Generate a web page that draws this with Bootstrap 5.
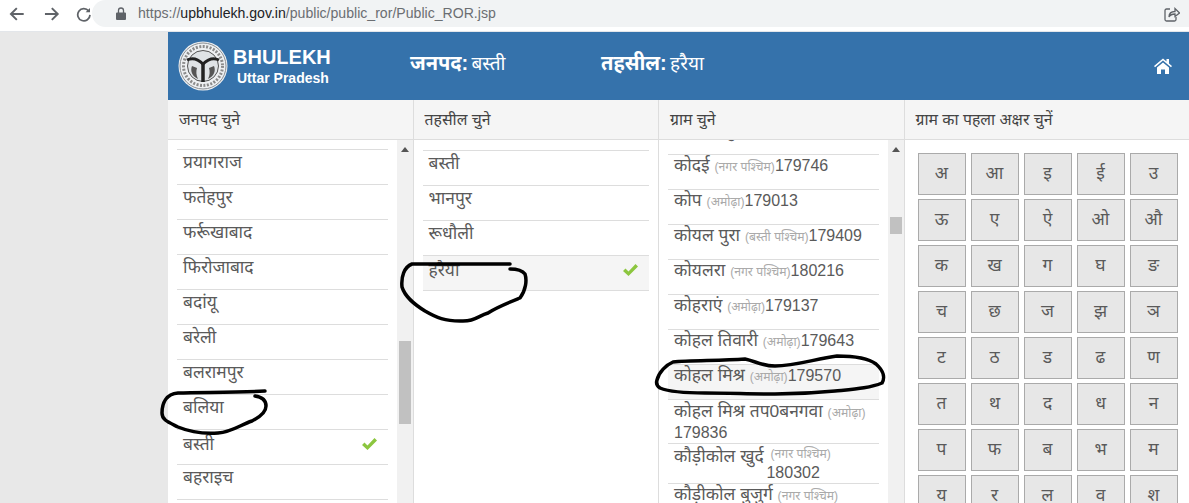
<!DOCTYPE html>
<html lang="hi">
<head>
  <meta charset="UTF-8">
  <meta name="viewport" content="width=device-width, initial-scale=1.0">
  <title>Bhulekh - Public ROR</title>
  <link href="https://cdn.jsdelivr.net/npm/bootstrap@5.3.3/dist/css/bootstrap.min.css" rel="stylesheet" />
  <style>
    html, body { height: 503px; overflow: hidden; }
    body { background-color: #e8e8e8; font-family: "Liberation Sans", "Noto Sans", "Noto Sans Devanagari", Arial, sans-serif; color: #555; position: relative; }
    .chrome-bar { height: 32px; background: #fff; border-bottom: 1px solid #e3e6ea; padding-bottom: 4px; }
    .nav-btns { width: 92px; padding-left: 7px; gap: 15px; }
    .omnibox { background: #f1f3f4; border-radius: 14px 0 0 14px; padding: 0 9px 0 24px; font-size: 14.1px; color: #6b6e72; }
    .omnibox b { font-weight: 400; color: #202124; }
    .app-wrap { margin-left: 168px; height: 471px; background: #fff; }
    .site-head { height: 68px; background: #3572ab; color: #fff; padding: 0 17px 0 10px; }
    .brand-txt { margin-left: 5px; width: 177px; }
    .brand-main { font-size: 20px; font-weight: 700; line-height: 22px; }
    .brand-sub { font-size: 14px; font-weight: 700; line-height: 16px; padding-left: 4px; margin-top: 2px; }
    .head-pick { font-size: 19px; width: 191px; padding-bottom: 5px; }
    .head-pick strong { font-size: 20px; margin-right: -2px; }
    .col-a, .col-b, .col-c { width: 245.5px; flex: none; }
    .col-d { flex: 1; }
    .pane-title { height: 40px; background: #f5f5f5; border-bottom: 1px solid #ddd; border-right: 1px solid #ddd; padding: 0 11px; font-size: 15.8px; line-height: 40px; color: #444; }
    .pane-body { height: 363px; overflow: hidden; border-right: 1px solid #ddd; }
    .pick-list { padding: 9px 9px 0; min-width: 0; }
    .pick-list.pushed { padding-top: 10px; }
    .pick-list.scrolled { margin-top: -30px; }
    .pick-list.scrolled .pick-row { line-height: 21px; }
    .pick-row { height: 35px; border-top: 1px solid #ddd; padding: 0 6px; font-size: 17.4px; line-height: 24px; color: #5a5a5a; background: transparent; }
    .pick-row.on { background: #f5f5f5; }
    .pick-row.sel-row { padding-bottom: 6px; }
    .pick-list.scrolled .pick-row.tall { height: 44px; line-height: 19px; padding-top: 2px; }
    .pick-list.scrolled .pick-row.mid { height: 40px; line-height: 20px; padding-top: 2px; }
    .pick-row small { font-size: 12.2px; color: #aaa; }
    .vill-no { font-size: 16px; }
    .stack-in { display: inline-block; vertical-align: top; line-height: 20px; margin-left: -2px; }
    .stack-in small { display: block; padding-left: 4px; line-height: 16px; }
    .tick { width: 17px; height: 14px; margin-right: 4px; }
    .track { width: 16px; background: #f1f1f1; flex: none; position: relative; }
    .track::before { content: ""; display: block; width: 0; margin: 7px auto 0; border: 4px solid transparent; border-top: 0; border-bottom: 5px solid #555; }
    .grip { background: #c1c1c1; margin: 0 2px; }
    .grip-a { height: 83px; margin-top: 189px; }
    .grip-c { height: 17px; margin-top: 65px; }
    .letter-grid { display: grid; grid-template-columns: repeat(5, 48px); grid-auto-rows: 42px; gap: 4px 5px; padding: 13px 0 0 13px; }
    .letter-btn { background: #e7e7e7; border: 1px solid #aaa; border-radius: 0; padding: 0 0 2px; font-size: 17.4px; color: #5a5a5a; }
    .ink { position: absolute; left: 0; top: 0; pointer-events: none; }
  </style>
</head>
<body>

<!-- browser bar -->
<div class="chrome-bar d-flex">
  <div class="nav-btns d-flex align-items-center">
    <svg width="20" height="20" viewBox="0 0 20 20" fill="none" stroke="#5f6368" stroke-width="2"><path d="M17 10H4M10 4l-6 6 6 6"/></svg>
    <svg width="20" height="20" viewBox="0 0 20 20" fill="none" stroke="#5f6368" stroke-width="2"><path d="M3 10h13M10 4l6 6-6 6"/></svg>
    <svg width="16" height="16" viewBox="0 0 18 18" fill="none" stroke="#5f6368" stroke-width="2"><path d="M14.500 5.500A7 7 0 1 0 16 10"/><path d="M16 2v5h-5" fill="#5f6368" stroke="none"/></svg>
  </div>
  <div class="omnibox flex-grow-1 d-flex align-items-center">
    <svg class="me-2" width="10" height="13" viewBox="0 0 10 13"><path d="M1 5.500h8a1 1 0 0 1 1 1V12a1 1 0 0 1-1 1H1a1 1 0 0 1-1-1V6.500a1 1 0 0 1 1-1z" fill="#5f6368"/><path d="M2.500 6V3.500a2.500 2.500 0 0 1 5 0V6" fill="none" stroke="#5f6368" stroke-width="1.300"/></svg>
    <span class="ms-1">https://<b>upbhulekh.gov.in</b>/public/public_ror/Public_ROR.jsp</span>
    <svg class="ms-auto" width="16" height="16" viewBox="0 0 16 16" fill="none" stroke="#5f6368" stroke-width="1.300"><path d="M6 3H2.500A1.500 1.500 0 0 0 1 4.500v9A1.500 1.500 0 0 0 2.500 15h8a1.500 1.500 0 0 0 1.500-1.500V11"/><path d="M5 11c0-4 3-5.500 6-5.500V2.500L15.500 7 11 10.500V8c-3 0-5 1-6 3z"/></svg>
  </div>
</div>

<div class="app-wrap">
  <!-- header -->
  <div class="site-head d-flex align-items-center">
    <svg width="50" height="50" viewBox="0 0 50 50">
      <circle cx="25" cy="25" r="24.500" fill="#eef0f2"/>
      <circle cx="25" cy="25" r="23" fill="none" stroke="#8a8f94" stroke-width="1"/>
      <circle cx="25" cy="25" r="15.500" fill="#dfe3e6" stroke="#555" stroke-width="1"/>
      <circle cx="25" cy="25" r="19.500" fill="none" stroke="#8b8b8b" stroke-width="3" stroke-dasharray="2 1.500"/>
      <path d="M9 19c6-3 11-1 16 4 5-5 10-7 16-4" fill="none" stroke="#222" stroke-width="3"/>
      <path d="M25 22v19" stroke="#222" stroke-width="3.500"/>
      <path d="M14 25c-2 5 0 10 6 13 -2-4-2-8-1-11zM36 25c2 5 0 10-6 13 2-4 2-8 1-11z" fill="#555"/>
    </svg>
    <div class="brand-txt">
      <div class="brand-main">BHULEKH</div>
      <div class="brand-sub">Uttar Pradesh</div>
    </div>
    <div class="head-pick"><strong>जनपद:</strong> बस्ती</div>
    <div class="head-pick"><strong>तहसील:</strong> हरैया</div>
    <svg class="ms-auto" width="18" height="16" viewBox="0 0 18 16" fill="#fff"><path d="M9 0.500L0 8l1 1.200L9 2.600l8 6.600L18 8l-3-2.500V1h-2.500v2.400z"/><path d="M3 9.500L9 4.500l6 5V16h-4v-4.500H7V16H3z"/></svg>
  </div>

  <!-- panes -->
  <div class="d-flex">
    <div class="col-a">
      <div class="pane-title">जनपद चुने</div>
      <div class="pane-body d-flex">
        <div class="pick-list flex-grow-1">
          <div class="pick-row">प्रयागराज</div>
          <div class="pick-row">फतेहपुर</div>
          <div class="pick-row">फर्रूखाबाद</div>
          <div class="pick-row">फिरोजाबाद</div>
          <div class="pick-row">बदांयू</div>
          <div class="pick-row">बरेली</div>
          <div class="pick-row">बलरामपुर</div>
          <div class="pick-row">बलिया</div>
          <div class="pick-row sel-row d-flex justify-content-between align-items-center">बस्ती
            <svg class="tick" viewBox="0 0 17 14"><path d="M1 8l2.500-2.500L6.500 8.500 13.500 1 16 3.500 6.500 13z" fill="#8cc63f"/></svg>
          </div>
          <div class="pick-row">बहराइच</div>
          <div class="pick-row"></div>
        </div>
        <div class="track"><div class="grip grip-a"></div></div>
      </div>
    </div>

    <div class="col-b">
      <div class="pane-title">तहसील चुने</div>
      <div class="pane-body">
        <div class="pick-list pushed">
          <div class="pick-row">बस्ती</div>
          <div class="pick-row">भानपुर</div>
          <div class="pick-row">रूधौली</div>
          <div class="pick-row on sel-row d-flex justify-content-between align-items-center">हरैया
            <svg class="tick" viewBox="0 0 17 14"><path d="M1 8l2.500-2.500L6.500 8.500 13.500 1 16 3.500 6.500 13z" fill="#8cc63f"/></svg>
          </div>
          <div class="pick-row"></div>
        </div>
      </div>
    </div>

    <div class="col-c">
      <div class="pane-title">ग्राम चुने</div>
      <div class="pane-body d-flex">
        <div class="flex-grow-1 overflow-hidden">
          <div class="pick-list scrolled">
            <div class="pick-row">कोटिया गुरु</div>
            <div class="pick-row">कोदई <small>(नगर पश्चिम)</small><span class="vill-no">179746</span></div>
            <div class="pick-row">कोप <small>(अमोढ़ा)</small><span class="vill-no">179013</span></div>
            <div class="pick-row">कोयल पुरा <small>(बस्ती पश्चिम)</small><span class="vill-no">179409</span></div>
            <div class="pick-row">कोयलरा <small>(नगर पश्चिम)</small><span class="vill-no">180216</span></div>
            <div class="pick-row">कोहराएं <small>(अमोढ़ा)</small><span class="vill-no">179137</span></div>
            <div class="pick-row">कोहल तिवारी <small>(अमोढ़ा)</small><span class="vill-no">179643</span></div>
            <div class="pick-row on">कोहल मिश्र <small>(अमोढ़ा)</small><span class="vill-no">179570</span></div>
            <div class="pick-row tall">कोहल मिश्र तप0बनगवा <small>(अमोढ़ा)</small> <span class="vill-no">179836</span></div>
            <div class="pick-row mid">कौड़ीकोल खुर्द <span class="stack-in"><small>(नगर पश्चिम)</small><span class="vill-no">180302</span></span></div>
            <div class="pick-row">कौड़ीकोल बुजुर्ग <small>(नगर पश्चिम)</small></div>
          </div>
        </div>
        <div class="track"><div class="grip grip-c"></div></div>
      </div>
    </div>

    <div class="col-d">
      <div class="pane-title border-end-0">ग्राम का पहला अक्षर चुनें</div>
      <div class="letter-grid" id="letters"></div>
    </div>
  </div>
</div>

<!-- hand drawn marks on the screenshot -->
<svg class="ink" width="1189" height="503" viewBox="0 0 1189 503" fill="none" stroke="#000" stroke-width="3.500" stroke-linecap="round" stroke-linejoin="round">
  <path d="M265 391C235 393 200 392 178 393C166 394 162 403 162 413C162 420 168 422 178 427C190 432 203 434 218 433C232 432 240 425 252 421C262 416 266 411 266 406C266 400 262 397 255 396"/>
  <path d="M510 264L412 264C404 267 401 277 402 287C405 297 414 304 425 311C437 318 445 321 460 321C474 322 478 316 488 313C497 307 510 302 520 298C526 290 527 280 525 274C522 270 516 269 510 269"/>
  <path d="M657 380C659 372 666 365 673 362C690 360 720 361 745 359C755 361 762 366 775 366C795 366 815 359 837 356C852 356 868 358 876 364C884 371 885 378 882 383C870 388 855 389 835 391C815 393 800 394 775 394C750 394 730 393 705 393C685 393 670 392 660 388C657 386 656 383 657 380"/>
</svg>

<script>
  // letter buttons for the village picker
  var letters = ['अ','आ','इ','ई','उ','ऊ','ए','ऐ','ओ','औ','क','ख','ग','घ','ङ','च','छ','ज','झ','ञ','ट','ठ','ड','ढ','ण','त','थ','द','ध','न','प','फ','ब','भ','म','य','र','ल','व','श'];
  var box = document.getElementById('letters');
  letters.forEach(function (l) {
    var b = document.createElement('button');
    b.type = 'button';
    b.className = 'letter-btn';
    b.textContent = l;
    box.appendChild(b);
  });
</script>

<script src="https://cdn.jsdelivr.net/npm/bootstrap@5.3.3/dist/js/bootstrap.bundle.min.js"></script>
</body>
</html>
